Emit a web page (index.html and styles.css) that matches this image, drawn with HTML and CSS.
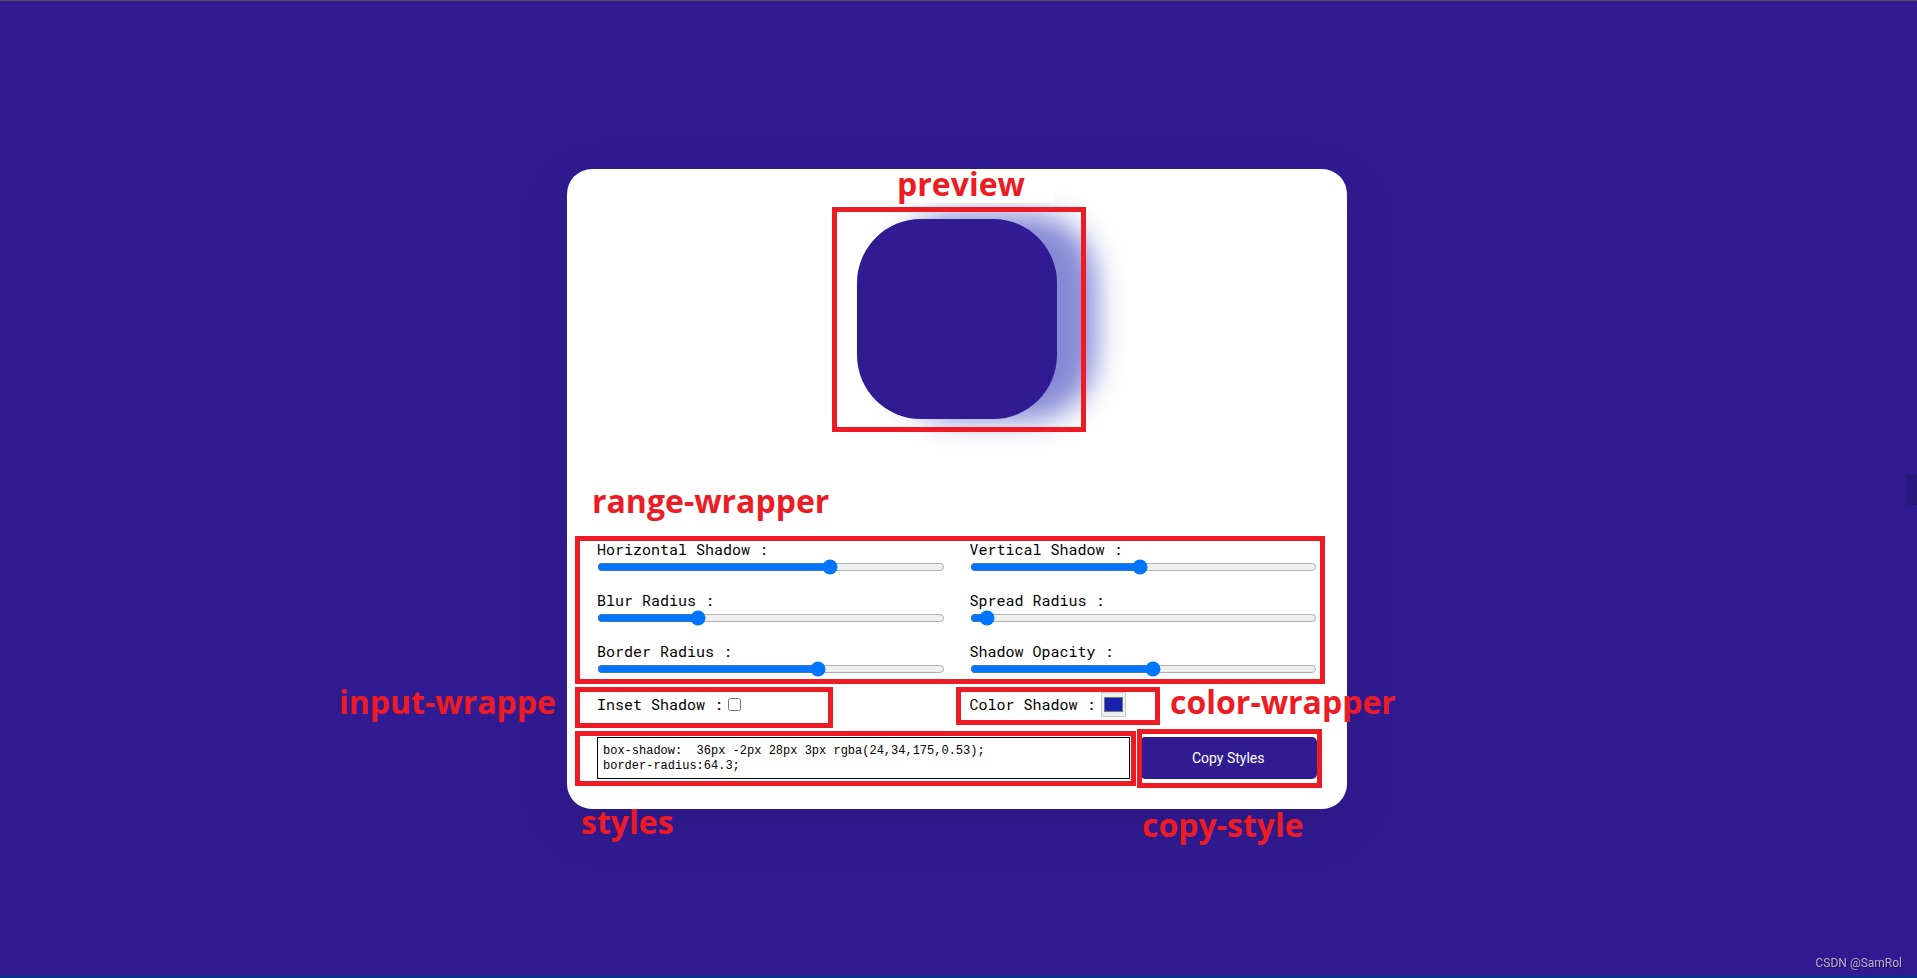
FILE: index.html
```html
<!DOCTYPE html>
<html lang="en">
<head>
<meta charset="utf-8">
<title>Box Shadow Generator</title>
<link rel="stylesheet" href="styles.css">
</head>
<body>
<main class="stage">
  <section class="card">
    <div class="preview"><div class="preview-box"></div></div>
    <div class="range-wrapper">
      <div class="field"><label for="h">Horizontal Shadow :</label><input id="h" type="range" min="-100" max="100" value="36"></div>
      <div class="field"><label for="v">Vertical Shadow :</label><input id="v" type="range" min="-100" max="100" value="-2"></div>
      <div class="field"><label for="blur">Blur Radius :</label><input id="blur" type="range" min="0" max="100" value="28"></div>
      <div class="field"><label for="spread">Spread Radius :</label><input id="spread" type="range" min="0" max="100" value="3"></div>
      <div class="field"><label for="radius">Border Radius :</label><input id="radius" type="range" min="0" max="100" step="0.1" value="64.3"></div>
      <div class="field"><label for="opacity">Shadow Opacity :</label><input id="opacity" type="range" min="0" max="1" step="0.01" value="0.53"></div>
    </div>
    <div class="options">
      <div class="option"><label for="inset">Inset Shadow :</label><input id="inset" class="check" type="checkbox"></div>
      <div class="option"><label for="color">Color Shadow :</label><input id="color" class="color" type="color" value="#1822af"></div>
    </div>
    <div class="output">
      <textarea class="styles" aria-label="Styles" spellcheck="false" readonly>box-shadow:  36px -2px 28px 3px rgba(24,34,175,0.53);
border-radius:64.3;</textarea>
      <button class="copy" type="button">Copy Styles</button>
    </div>

    <div class="note note-preview">preview</div>
    <div class="note note-range">range-wrapper</div>
    <div class="note note-input">input-wrappe</div>
    <div class="note note-color">color-wrapper</div>
    <div class="note note-styles">styles</div>
    <div class="note note-copy">copy-style</div>
    <div class="frame frame-preview"></div>
    <div class="frame frame-range"></div>
    <div class="frame frame-input"></div>
    <div class="frame frame-color"></div>
    <div class="frame frame-styles"></div>
    <div class="frame frame-copy"></div>
  </section>
</main>
<div class="handle"></div>
<div class="credit">CSDN @SamRol</div>
</body>
</html>
```
FILE: styles.css
```css
* { box-sizing: border-box; }

body {
  margin: 0;
  background: #311b92;
  color: #000;
}

.stage {
  display: flex;
  align-items: center;
  justify-content: center;
  min-height: 100vh;
  padding-right: 3px;
  border-top: 1px solid #555;
  border-bottom: 2px solid #05358a;
}

.card {
  position: relative;
  width: 780px;
  max-width: 100%;
  padding: 50px 30px 30px;
  border-radius: 25px;
  background: #fff;
  box-shadow: 0 16px 50px rgba(0, 10, 45, 0.14);
  font: 15px/19px "Roboto Mono", "DejaVu Sans Mono", monospace;
}

.preview {
  display: flex;
  justify-content: center;
  margin-bottom: 121px;
}

.preview-box {
  width: 200px;
  height: 200px;
  border-radius: 64px;
  background: #311b92;
  box-shadow: 36px -2px 28px 3px rgba(24, 34, 175, 0.53);
}

.range-wrapper {
  display: grid;
  grid-template-columns: 1fr 1fr;
  gap: 16px 25px;
}

.field {
  display: flex;
  flex-direction: column;
}

.field input {
  width: 100%;
  height: 16px;
  margin: 0;
}

.options {
  display: grid;
  grid-template-columns: 1fr 1fr;
  column-gap: 25px;
  margin: 15px 0 20px;
}

.option {
  display: flex;
  align-items: center;
  gap: 5px;
}

.check {
  width: 13px;
  height: 13px;
  margin: 0;
}

.color {
  width: 25px;
  height: 25px;
  padding: 0;
  border: 1px solid #ccc;
  background: #efefef;
}

.color::-webkit-color-swatch-wrapper {
  padding: 4px 2px;
}

.color::-webkit-color-swatch {
  border: 1px solid #777;
}

.output {
  display: grid;
  grid-template-columns: 3fr 1fr;
  gap: 10px;
}

.styles {
  width: 100%;
  height: 42px;
  padding: 6px 5px 0;
  border: 1px solid #000;
  background: #fff;
  color: #000;
  font: 12px/15px "Liberation Mono", monospace;
  resize: none;
  overflow: hidden;
}

.copy {
  border: 0;
  border-radius: 5px;
  background: #311b92;
  color: #fff;
  font: 14px/20px Roboto, sans-serif;
}

/* Annotations laid over the card */
.note {
  position: absolute;
  color: #ed1c24;
  font: bold 32px/40px "Open Sans", sans-serif;
  white-space: nowrap;
}

.note-preview { top: 0; left: 330px; padding: 0 30px 5px 0; line-height: 29px; background: #fff; }
.note-range { top: 312px; left: 25px; }
.note-input { top: 513px; left: -228px; }
.note-color { top: 513px; left: 603px; }
.note-styles { top: 633px; left: 14px; }
.note-copy { top: 636px; left: 575px; }

.frame {
  position: absolute;
  border: 5px solid #ed1c24;
  pointer-events: none;
}

.frame-preview { top: 38px; left: 265px; width: 254px; height: 225px; }
.frame-range { top: 367px; left: 8px; width: 750px; height: 148px; }
.frame-input { top: 518px; left: 8px; width: 258px; height: 41px; }
.frame-color { top: 518px; left: 389px; width: 204px; height: 38px; }
.frame-styles { top: 562px; left: 8px; width: 561px; height: 55px; }
.frame-copy { top: 560px; left: 570px; width: 185px; height: 59px; }

.handle {
  position: fixed;
  top: 474px;
  right: 0;
  width: 11px;
  height: 31px;
  background: #29187b;
}

.credit {
  position: fixed;
  right: 15px;
  bottom: 7px;
  color: #b9b2d6;
  font: 12px/16px Roboto, sans-serif;
  text-shadow: 1px 1px 1px rgba(0, 0, 0, 0.5);
}
```
